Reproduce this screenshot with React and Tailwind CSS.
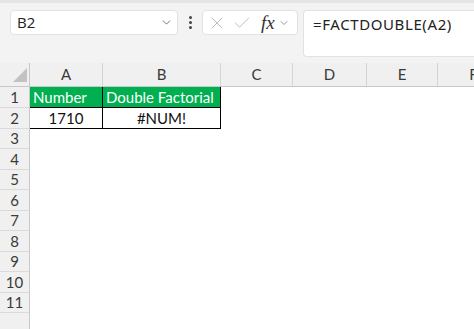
import { ChevronDown, X, Check } from 'lucide-react';

const cols = [
  { key: 'A', w: 'w-[73px]' },
  { key: 'B', w: 'w-[118px]' },
  { key: 'C', w: 'w-[72px]' },
  { key: 'D', w: 'w-[74px]' },
  { key: 'E', w: 'w-[71px]' },
  { key: 'F', w: 'w-[72px]' },
];

const rowHeights = ['h-[21px]', 'h-[21px]', 'h-[20px]', 'h-[21px]', 'h-[20px]', 'h-[21px]', 'h-[20px]', 'h-[21px]', 'h-[20px]', 'h-[21px]', 'h-[20px]', 'h-[21px]'];

function Cell({ w, className = '', children }) {
  return <div className={`${w} shrink-0 h-full flex items-center ${className}`}>{children}</div>;
}

function Row({ n, h, children }) {
  return (
    <div className={`flex ${h}`}>
      <div className="w-[30px] shrink-0 h-full bg-[#f0f0f0] border-r border-b border-r-[#c8c8c8] border-b-[#dadada] flex items-center justify-center text-[15px] text-[#3a3a3a]">
        {n}
      </div>
      {children}
    </div>
  );
}

export default function App() {
  return (
    <div className="w-[474px] h-[329px] overflow-hidden bg-white font-['Lato',sans-serif]">
      <div className="h-[3px] bg-[#e4e4e4]" />
      <div className="h-[60px] bg-[#f3f3f3] flex items-start pt-[7px] pl-[10px]">
        <div className="w-[168px] h-[25px] bg-white rounded border border-[#e2e2e2] flex items-center justify-between pl-[6px] pr-[4px]">
          <span className="text-[15px] text-[#222] font-['Open_Sans',sans-serif]">B2</span>
          <ChevronDown size={13} strokeWidth={1.5} className="text-[#555]" />
        </div>
        <div className="w-[24px] h-[25px] flex flex-col items-center justify-center gap-[2px]">
          <span className="w-[3px] h-[3px] bg-[#444] rounded-full" />
          <span className="w-[3px] h-[3px] bg-[#444] rounded-full" />
          <span className="w-[3px] h-[3px] bg-[#444] rounded-full" />
        </div>
        <div className="w-[96px] h-[25px] bg-white rounded border border-[#e2e2e2] flex items-center pl-[4px]">
          <X size={20} strokeWidth={1} className="text-[#b0b0b0]" />
          <Check size={20} strokeWidth={1} className="text-[#b0b0b0] ml-[5px]" />
          <span className="ml-[9px] text-[19px] italic font-['Liberation_Serif',serif] text-[#333] leading-none">fx</span>
          <ChevronDown size={12} strokeWidth={1.5} className="text-[#777] ml-[3px]" />
        </div>
        <div className="ml-[5px] flex-1 h-[47px] bg-white rounded-l border border-r-0 border-[#e2e2e2] pl-[9px] pt-[1px]">
          <span className="text-[15px] tracking-[0.6px] text-[#222] font-['Noto_Sans',sans-serif]">=FACTDOUBLE(A2)</span>
        </div>
      </div>

      <div className="flex h-[24px] bg-[#f0f0f0] border-b border-[#c8c8c8]">
        <div className="w-[30px] shrink-0 h-full border-r border-[#c8c8c8] relative">
          <svg className="absolute left-[13px] top-[5px]" width="14" height="14" viewBox="0 0 14 14">
            <polygon points="14,0 14,14 0,14" fill="#c2c2c2" />
          </svg>
        </div>
        {cols.map((c) => (
          <Cell key={c.key} w={c.w} className="justify-center border-r border-[#d4d4d4] text-[15px] text-[#3a3a3a]">
            {c.key}
          </Cell>
        ))}
      </div>

      <Row n={1} h={rowHeights[0]}>
        <Cell w="w-[73px]" className="bg-[#00b050] border-r border-b border-black text-white text-[15px] pl-[3px]">Number</Cell>
        <Cell w="w-[118px]" className="bg-[#00b050] border-r border-b border-black text-white text-[15px] pl-[3px]">Double Factorial</Cell>
      </Row>
      <Row n={2} h={rowHeights[1]}>
        <Cell w="w-[73px]" className="border-r border-b border-black text-[#111] text-[15px] justify-center">1710</Cell>
        <Cell w="w-[118px]" className="border-r border-b border-black text-[#111] text-[15px] justify-center">#NUM!</Cell>
      </Row>
      {[3, 4, 5, 6, 7, 8, 9, 10, 11].map((n, i) => (
        <Row key={n} n={n} h={rowHeights[i + 2]} />
      ))}
      <Row n="" h={rowHeights[11]} />
    </div>
  );
}
